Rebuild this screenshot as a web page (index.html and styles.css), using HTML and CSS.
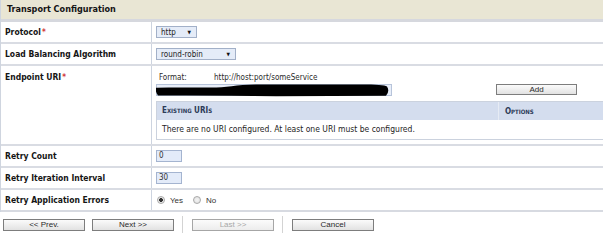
FILE: index.html
```html
<!DOCTYPE html>
<html>
<head>
<meta charset="utf-8">
<link rel="stylesheet" href="styles.css">
</head>
<body>
<div class="panel">
  <div class="title">Transport Configuration</div>
  <div class="row">
    <div class="label">Protocol<span class="req">*</span></div>
    <div class="field"><span class="select sel-proto">http<span class="arrow">▼</span></span></div>
  </div>
  <div class="row">
    <div class="label">Load Balancing Algorithm</div>
    <div class="field"><span class="select sel-lb">round-robin<span class="arrow">▼</span></span></div>
  </div>
  <div class="row row-endpoint">
    <div class="label label-top">Endpoint URI<span class="req">*</span></div>
    <div class="field endpoint">
      <div class="format"><span class="fmt-label">Format:</span><span>http://host:port/someService</span></div>
      <div class="uri-line">
        <span class="uri-input">
          <svg class="redact" width="236" height="13" viewBox="0 0 236 13"><path d="M0,3.8 C20,3.2 40,3.6 55,3.6 C70,3.6 80,0.6 100,0.4 L205,0.4 C220,0.4 229,0.8 231,2.5 Q234,7 230,11.8 L120,12.2 C90,12.2 60,11.6 30,11.6 L2,11.6 Q-1,7.5 0,3.8 Z" fill="#000"/></svg>
        </span>
        <span class="btn btn-add">Add</span>
      </div>
      <div class="uris">
        <div class="uris-head"><span class="col-uri">Existing URIs</span><span class="col-opt">Options</span></div>
        <div class="uris-body">There are no URI configured. At least one URI must be configured.</div>
      </div>
    </div>
  </div>
  <div class="row">
    <div class="label">Retry Count</div>
    <div class="field"><span class="text-input">0</span></div>
  </div>
  <div class="row">
    <div class="label">Retry Iteration Interval</div>
    <div class="field"><span class="text-input">30</span></div>
  </div>
  <div class="row row-last">
    <div class="label">Retry Application Errors</div>
    <div class="field radios">
      <span class="radio checked"></span><span class="radio-text">Yes</span>
      <span class="radio"></span><span class="radio-text">No</span>
    </div>
  </div>
</div>
<div class="actions">
  <span class="btn btn-nav">&lt;&lt; Prev.</span>
  <span class="btn btn-nav">Next &gt;&gt;</span>
  <span class="sep"></span>
  <span class="btn btn-nav disabled">Last &gt;&gt;</span>
  <span class="sep"></span>
  <span class="btn btn-nav">Cancel</span>
</div>
</body>
</html>
```
FILE: styles.css
```css
html, body {
  margin: 0;
  padding: 0;
  background: #ffffff;
}
body {
  width: 603px;
  height: 243px;
  overflow: hidden;
  font-family: "DejaVu Sans Condensed", "DejaVu Sans", sans-serif;
  font-stretch: condensed;
  font-size: 8.5px;
  color: #1b1b1b;
}
.panel {
  border-left: 1px solid #cfd5df;
}
.title {
  height: 19px;
  line-height: 19px;
  padding-left: 6px;
  background: #e9e6d4;
  border-bottom: 3px solid #d6d8de;
  font-weight: bold;
  font-size: 9px;
  color: #141414;
}
.row {
  display: grid;
  grid-template-columns: 151px 1fr;
  height: 20px;
  border-bottom: 2px solid #d9dce3;
}
.row-endpoint {
  height: 78px;
}
.row-last {
  border-bottom: 2px solid #d7dae1;
}
.label {
  border-right: 1px solid #cdd4e0;
  padding-left: 4px;
  display: flex;
  align-items: center;
  font-weight: bold;
  color: #151515;
}
.label-top {
  align-items: flex-start;
  padding-top: 6px;
}
.req {
  color: #d23a3a;
  font-size: 8px;
  align-self: flex-start;
  margin-top: 6px;
  margin-left: 1px;
}
.label-top .req {
  margin-top: 1px;
}
.field {
  padding-left: 4px;
  display: flex;
  align-items: center;
}
.select {
  display: inline-flex;
  align-items: center;
  height: 10px;
  border: 1px solid #a2b0c8;
  background: #e5ecf8;
  padding-left: 4px;
  font-size: 8px;
  color: #222;
  box-sizing: content-box;
}
.sel-proto { width: 35px; }
.sel-lb { width: 74px; }
.arrow {
  margin-left: auto;
  margin-right: 5px;
  font-size: 5px;
  color: #111;
}
.endpoint {
  flex-direction: column;
  align-items: stretch;
  padding-top: 6px;
  padding-left: 4px;
}
.format {
  display: flex;
  height: 11px;
  line-height: 11px;
  padding-left: 3px;
  color: #2a2a2a;
  font-size: 8px;
}
.fmt-label {
  width: 55px;
}
.uri-line {
  display: flex;
  align-items: flex-start;
  height: 12px;
  margin-top: 1px;
}
.uri-input {
  position: relative;
  display: block;
  width: 234px;
  height: 10px;
  border: 1px solid #b7c4da;
  background: #e8eef9;
}
.redact {
  position: absolute;
  left: -1px;
  top: -1px;
}
.btn {
  display: inline-flex;
  align-items: center;
  justify-content: center;
  box-sizing: border-box;
  height: 12px;
  border: 1px solid #7d7d7d;
  background: linear-gradient(#fbfbfb, #e2e2e2);
  font-family: "Liberation Sans", Arial, sans-serif;
  font-stretch: normal;
  font-size: 8px;
  color: #2a2a2a;
}
.btn-add {
  width: 81px;
  margin-left: 104px;
  height: 11px;
}
.uris {
  margin-top: 5px;
  border: 1px solid #cbd2de;
  border-right: none;
}
.uris-head {
  display: flex;
  height: 18px;
  align-items: center;
  background: #d4ddee;
  font-variant: small-caps;
  font-weight: bold;
  color: #2c3b58;
  font-size: 8px;
}
.col-uri {
  width: 342px;
  padding-left: 5px;
  box-sizing: border-box;
  border-right: 1px solid #e6ebf4;
  height: 18px;
  line-height: 18px;
}
.col-opt {
  padding-left: 6px;
}
.uris-body {
  height: 19px;
  line-height: 19px;
  padding-left: 5px;
  color: #1e1e1e;
}
.text-input {
  display: block;
  width: 22px;
  height: 10px;
  line-height: 10px;
  border: 1px solid #a4b4d0;
  background: #e3ebf9;
  padding-left: 2px;
  font-size: 8px;
  color: #333;
}
.radios {
  padding-left: 4px;
}
.radio {
  display: inline-block;
  width: 6px;
  height: 6px;
  border-radius: 50%;
  border: 1px solid #a9a9a9;
  background: radial-gradient(circle, #f4f4f4 0, #dedede 100%);
  margin-left: 1px;
}
.radio.checked {
  background: radial-gradient(circle, #333 0, #333 1.6px, #eaeaea 2.2px);
}
.radio-text {
  margin-left: 5px;
  margin-right: 9px;
  font-family: "Liberation Sans", Arial, sans-serif;
  font-stretch: normal;
  font-size: 8px;
  color: #333;
}
.actions {
  display: flex;
  align-items: center;
  padding-left: 3px;
  margin-top: 4px;
  height: 17px;
}
.btn-nav {
  width: 82px;
  margin-right: 7px;
}
.btn-nav.disabled {
  color: #a8a8a8;
  border-color: #a6a6a6;
  background: linear-gradient(#fbfbfb, #ececec);
}
.sep {
  width: 1px;
  height: 17px;
  background: #d3d3d3;
  margin-right: 9px;
  margin-left: 1px;
}
```
